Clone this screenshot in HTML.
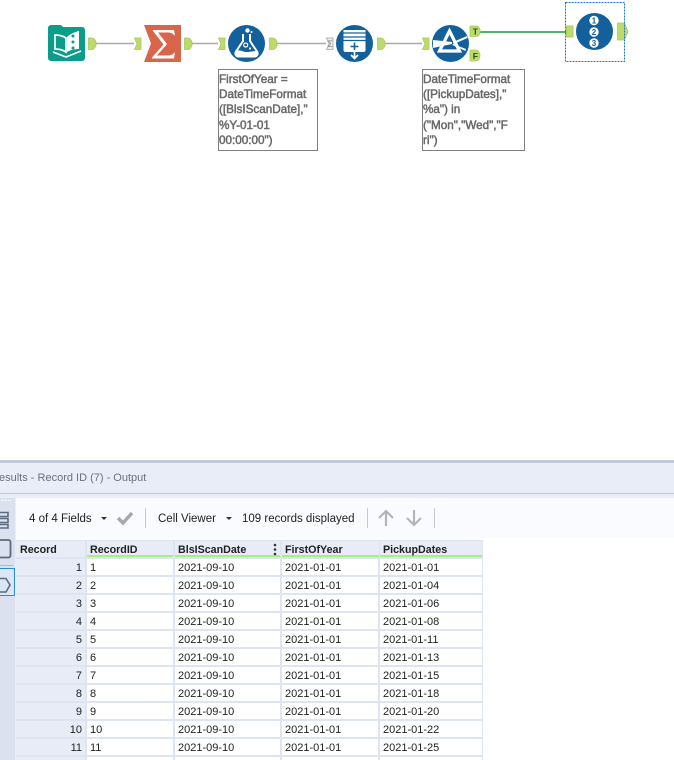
<!DOCTYPE html>
<html><head><meta charset="utf-8">
<style>
html,body{margin:0;padding:0;background:#fff}
#p{position:relative;width:674px;height:760px;overflow:hidden;background:#fff;font-family:"Liberation Sans",sans-serif;color:#222}
.a{position:absolute}
.note{position:absolute;box-sizing:border-box;border:1px solid #808080;background:#fff;color:#666;font-size:11.7px;font-weight:normal;-webkit-text-stroke:.5px #6a6a6a;line-height:15.2px;padding:2px 0 0 0;white-space:nowrap;height:82px;top:69px}
.t{position:absolute;top:511px;font-size:11.5px;line-height:16px;white-space:nowrap;color:#222}
.h{position:absolute;top:541px;height:14px;background:#e8ecf7;border-bottom:2px solid #a5f07f;font-size:10.7px;font-weight:bold;line-height:18px;padding-left:3px;color:#222}
.r{position:absolute;left:16px;width:466px;height:16px;font-size:11px;line-height:19px;color:#222}
.r b,.r i,.r u,.r s,.r em{position:absolute;top:0;height:16px;background:#fff;font-style:normal;font-weight:normal;text-decoration:none;padding-left:3px;box-sizing:border-box;white-space:nowrap}
.r b{left:0;width:69px;background:#e8ecf7;padding:0 3px 0 0;text-align:right}
.r i{left:71px;width:86px}
.r u{left:159px;width:105px}
.r s{left:266px;width:96px}
.r em{left:364px;width:102px}
</style></head><body><div id="p">

<svg class="a" style="left:0;top:0" width="674" height="160" viewBox="0 0 674 160">
<g stroke="#aaa" stroke-width="1.600" fill="none">
<path d="M96 43.500H134M192 43.500H218M276 43.500H326M384 43.500H422"/>
</g>
<path d="M480 32H567" stroke="#3aa655" stroke-width="1.800"/>
<g fill="#bddb6c" stroke="#a8c95c" stroke-width=".8">
<path d="M88.500 38h3a4.500 5.500 0 0 1 0 11.500h-3z"/>
<path d="M134.500 38h6.500v11.500h-6.500l2.500-5.500z"/>
<path d="M184.500 38h3a4.500 5.500 0 0 1 0 11.500h-3z"/>
<path d="M218.500 38h6.500v11.500h-6.500l2.500-5.500z"/>
<path d="M269.500 38h3a4.500 5.500 0 0 1 0 11.500h-3z"/>
<path d="M377.500 38h3a4.500 5.500 0 0 1 0 11.500h-3z"/>
<path d="M422.500 38h6.500v11.500h-6.500l2.500-5.500z"/>
<path d="M470 26h6a4 5 0 0 1 0 10.500h-6z"/>
<path d="M470 50h6a4 5.500 0 0 1 0 11h-6z"/>
<path d="M566.500 26h6.500v11h-6.500z"/>
<path d="M617.500 23h7l3.500 8.500-3.500 8.500h-7z"/>
</g>
<path d="M326.500 38h6.500v11.500h-6.500l2.500-5.500z" fill="#efefef" stroke="#b5b5b5"/>
<text x="472.700" y="34.500" font-size="8.500" font-weight="bold" fill="#2c4a1e" font-family="Liberation Sans">T</text>
<text x="472.700" y="59" font-size="8.500" font-weight="bold" fill="#2c4a1e" font-family="Liberation Sans">F</text>

<!-- book -->
<path d="M51 25h10l2 2h19a3 3 0 0 1 3 3v28a3 3 0 0 1-3 3H51a3 3 0 0 1-3-3V28a3 3 0 0 1 3-3z" fill="#0c9d8a"/>
<path d="M55 35c4 0 8 1 11 3v14c-3-2-7-3-11-3z" fill="none" stroke="#fff" stroke-width="1.700"/>
<path d="M79 31v18c-4 0-9 1-12 3V37c3-3 8-5 12-6z" fill="#fff"/>
<circle cx="73" cy="36" r="1.500" fill="#0c9d8a"/><circle cx="73" cy="42" r="1.500" fill="#0c9d8a"/><circle cx="73" cy="48" r="1.500" fill="#0c9d8a"/>
<path d="M53 52l13 5 15-6" stroke="#fff" stroke-width="1.600" fill="none"/>

<!-- sigma -->
<path d="M144 25h37v37h-37l7-18.500z" fill="#d9664a"/>
<path d="M153 30h21l1 6c-2-2.500-4-3.500-7-3.500h-10l9 11.500-10 11.500h11c3 0 5-1 7-3.500l-1 6.500h-22v-1l11.500-13-10.500-13.500z" fill="#fff"/>

<!-- flask -->
<circle cx="246.500" cy="43.500" r="18.500" fill="#14609c"/>
<path d="M243 34v7l-7 10.500c-1.500 2.500 0 5 2.500 5h16c2.500 0 4-2.500 2.500-5l-7-10.500v-7" fill="none" stroke="#fff" stroke-width="2"/>
<path d="M236 51c4-2 7 1 10.500 1s6-1 10.500-1l1 3-2 3h-19l-2-3z" fill="#fff"/>
<circle cx="245.700" cy="45" r="2" fill="none" stroke="#fff" stroke-width="1.200"/>
<circle cx="250" cy="48.500" r="1.100" fill="#fff"/>
<circle cx="247.500" cy="30.500" r="2.200" fill="#fff"/><circle cx="251.500" cy="32" r="1" fill="#fff"/>

<!-- record id -->
<circle cx="354.500" cy="43.500" r="18.500" fill="#14609c"/>
<path d="M343.500 30h22v20a2 2 0 0 1-2 2h-18a2 2 0 0 1-2-2z" fill="#fff"/>
<path d="M343.500 33h22M343.500 37h22M343.500 40.500h22" stroke="#14609c" stroke-width="1.300"/>
<path d="M354.500 42.500v8M350.500 46.500h8" stroke="#14609c" stroke-width="1.600"/>
<path d="M354.500 50v8M351 55l3.500 3.500 3.500-3.500" stroke="#fff" stroke-width="1.700" fill="none"/>

<!-- filter -->
<circle cx="450.500" cy="43.500" r="18.500" fill="#14609c"/>
<path d="M449.500 31l10 20h-20z" fill="none" stroke="#fff" stroke-width="3.200"/>
<path d="M433 40l19 2v2l-19 4z" fill="#fff"/>
<path d="M453 42l14-6 .6 2-14 6zM453 44l13 5-.6 2-13-6z" fill="#fff"/>

<!-- select -->
<rect x="565.500" y="2.500" width="59" height="59" fill="none" stroke="#1e78c8" stroke-width="1" stroke-dasharray="2 1"/>
<circle cx="594.500" cy="31.500" r="18.500" fill="#14609c"/>
<g fill="#fff"><circle cx="594" cy="20.500" r="4.700"/><circle cx="594" cy="32" r="4.700"/><circle cx="594" cy="43" r="4.700"/></g>
<g fill="#14609c" font-size="8" font-weight="bold" text-anchor="middle" font-family="Liberation Sans">
<text x="594" y="23.300">1</text><text x="594" y="34.800">2</text><text x="594" y="45.800">3</text>
</g>
<path d="M566.500 26h6.500v11h-6.500z" fill="#bddb6c" stroke="#a8c95c" stroke-width=".8"/>
</svg>
<div class="a" style="left:327.500px;top:37.500px;font-size:9px;line-height:12px;color:#888">Σ</div>

<div class="note" style="left:218px;width:100px">FirstOfYear =<br>DateTimeFormat<br>([BlsIScanDate],"<br>%Y-01-01<br>00:00:00")</div>
<div class="note" style="left:422px;width:103px">DateTimeFormat<br>([PickupDates],"<br>%a") in<br>("Mon","Wed","F<br>ri")</div>

<!-- results panel -->
<div class="a" style="left:0;top:460px;width:674px;height:3px;background:#c3c9d8"></div>
<div class="a" style="left:0;top:463px;width:674px;height:30px;background:#e9edf8"></div>
<div class="a" style="left:0;top:493px;width:674px;height:1px;background:#c5c9d3"></div>
<div class="a" style="left:0;top:494px;width:674px;height:266px;background:#e9edf8"></div>
<div class="a" style="left:-1px;top:470px;font-size:11px;line-height:16px;color:#6a717c;white-space:nowrap">esults - Record ID (7) - Output</div>

<div class="a" style="left:16px;top:498px;width:658px;height:40px;background:#f9fbff"></div>
<div class="a" style="left:16px;top:538px;width:658px;height:222px;background:#fff"></div>
<div class="a" style="left:0;top:498px;width:15px;height:262px;background:#dbe1ee"></div>
<div class="a" style="left:1px;top:500px;width:10px;height:2px;border-top:1px dotted #fff"></div>
<svg class="a" style="left:0;top:505px" width="16" height="95" viewBox="0 0 16 95">
<path d="M-3 7.500h11v4H-3zM-3 13.500h11v4H-3zM-3 19.500h11v3.500H-3z" fill="none" stroke="#5d6a80" stroke-width="1.600"/>
<rect x="-4" y="35" width="14.500" height="17.500" rx="2" fill="none" stroke="#5d6a80" stroke-width="1.800"/>
<path d="M0 60.500h13" stroke="#b5bac6" stroke-width="1"/>
<rect x="-2" y="63.500" width="16.500" height="27" fill="#dbe6f6" stroke="#2a8ad4"/>
<path d="M-3 73.500h9l4 6.500-4 7h-9" fill="none" stroke="#5d6a80" stroke-width="1.600"/>
</svg>

<div class="t" style="left:29px">4 of 4 Fields</div>
<div class="a" style="left:101px;top:517px;width:0;height:0;border-left:3px solid transparent;border-right:3px solid transparent;border-top:3px solid #333"></div>
<svg class="a" style="left:116px;top:510px" width="18" height="16"><path d="M2 8l5 5L16 3" fill="none" stroke="#a8a8a8" stroke-width="3.500"/></svg>
<div class="a" style="left:145px;top:508px;width:1px;height:20px;background:#c9c9c9"></div>
<div class="t" style="left:158px">Cell Viewer</div>
<div class="a" style="left:226px;top:517px;width:0;height:0;border-left:3px solid transparent;border-right:3px solid transparent;border-top:3px solid #333"></div>
<div class="t" style="left:242px">109 records displayed</div>
<div class="a" style="left:367px;top:508px;width:1px;height:20px;background:#c9c9c9"></div>
<svg class="a" style="left:376px;top:508px" width="48" height="20" fill="none" stroke="#b5b5b5" stroke-width="2.200">
<path d="M10 18V3M3 10l7-7 7 7"/><path d="M38 2v15M31 10l7 7 7-7"/></svg>
<div class="a" style="left:434px;top:508px;width:1px;height:20px;background:#c9c9c9"></div>

<!-- table -->
<div class="a" style="left:16px;top:540px;width:467px;height:220px;background:#dee4f2"></div>
<div class="h" style="left:16px;width:65px;height:16px;border-bottom:0;padding-left:4px">Record</div>
<div class="h" style="left:87px;width:83px">RecordID</div>
<div class="h" style="left:175px;width:102px">BlsIScanDate</div>
<div class="h" style="left:282px;width:94px">FirstOfYear</div>
<div class="h" style="left:380px;width:99px">PickupDates</div>
<svg class="a" style="left:272px;top:543px" width="6" height="13" fill="#333"><circle cx="3" cy="2" r="1.300"/><circle cx="3" cy="6.500" r="1.300"/><circle cx="3" cy="11" r="1.300"/></svg>

<div class="r" style="top:559px"><b>1</b><i>1</i><u>2021-09-10</u><s>2021-01-01</s><em>2021-01-01</em></div>
<div class="r" style="top:577px"><b>2</b><i>2</i><u>2021-09-10</u><s>2021-01-01</s><em>2021-01-04</em></div>
<div class="r" style="top:595px"><b>3</b><i>3</i><u>2021-09-10</u><s>2021-01-01</s><em>2021-01-06</em></div>
<div class="r" style="top:613px"><b>4</b><i>4</i><u>2021-09-10</u><s>2021-01-01</s><em>2021-01-08</em></div>
<div class="r" style="top:631px"><b>5</b><i>5</i><u>2021-09-10</u><s>2021-01-01</s><em>2021-01-11</em></div>
<div class="r" style="top:649px"><b>6</b><i>6</i><u>2021-09-10</u><s>2021-01-01</s><em>2021-01-13</em></div>
<div class="r" style="top:667px"><b>7</b><i>7</i><u>2021-09-10</u><s>2021-01-01</s><em>2021-01-15</em></div>
<div class="r" style="top:685px"><b>8</b><i>8</i><u>2021-09-10</u><s>2021-01-01</s><em>2021-01-18</em></div>
<div class="r" style="top:703px"><b>9</b><i>9</i><u>2021-09-10</u><s>2021-01-01</s><em>2021-01-20</em></div>
<div class="r" style="top:721px"><b>10</b><i>10</i><u>2021-09-10</u><s>2021-01-01</s><em>2021-01-22</em></div>
<div class="r" style="top:739px"><b>11</b><i>11</i><u>2021-09-10</u><s>2021-01-01</s><em>2021-01-25</em></div>
<div class="r" style="top:757px"><b></b><i></i><u></u><s></s><em></em></div>
</div></body></html>
